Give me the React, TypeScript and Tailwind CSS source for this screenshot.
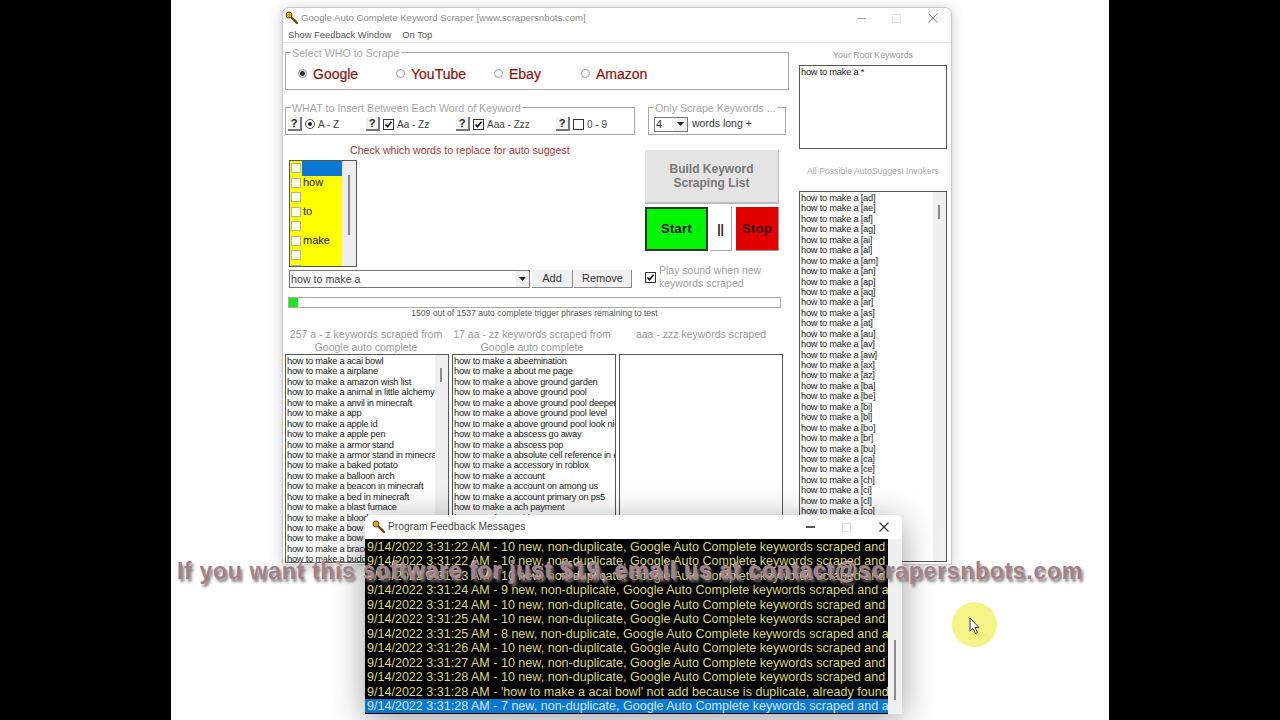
const col1 = ["acai bowl","airplane","amazon wish list","animal in little alchemy","anvil in minecraft","app","apple id","apple pen","armor stand","armor stand in minecraft","baked potato","balloon arch","beacon in minecraft","bed in minecraft","blast furnace","blood moon","bow","bow and arrow","bracelet","budget"];
const col2 = ["abeemination","about me page","above ground garden","above ground pool","above ground pool deeper","above ground pool level","above ground pool look nice","abscess go away","abscess pop","absolute cell reference in excel","accessory in roblox","account","account on among us","account primary on ps5","ach payment","acid"];
const invokers = ["ad","ae","af","ag","ai","al","am","an","ap","aq","ar","as","at","au","av","aw","ax","az","ba","be","bi","bl","bo","br","bu","ca","ce","ch","ci","cl","co"];
const feedback = [
  "9/14/2022 3:31:22 AM - 10 new, non-duplicate, Google Auto Complete keywords scraped and added",
  "9/14/2022 3:31:22 AM - 10 new, non-duplicate, Google Auto Complete keywords scraped and added",
  "9/14/2022 3:31:23 AM - 10 new, non-duplicate, Google Auto Complete keywords scraped and added",
  "9/14/2022 3:31:24 AM - 9 new, non-duplicate, Google Auto Complete keywords scraped and added",
  "9/14/2022 3:31:24 AM - 10 new, non-duplicate, Google Auto Complete keywords scraped and added",
  "9/14/2022 3:31:25 AM - 10 new, non-duplicate, Google Auto Complete keywords scraped and added",
  "9/14/2022 3:31:25 AM - 8 new, non-duplicate, Google Auto Complete keywords scraped and added",
  "9/14/2022 3:31:26 AM - 10 new, non-duplicate, Google Auto Complete keywords scraped and added",
  "9/14/2022 3:31:27 AM - 10 new, non-duplicate, Google Auto Complete keywords scraped and added",
  "9/14/2022 3:31:28 AM - 10 new, non-duplicate, Google Auto Complete keywords scraped and added",
  "9/14/2022 3:31:28 AM - 'how to make a acai bowl' not add because is duplicate, already found",
  "9/14/2022 3:31:28 AM - 7 new, non-duplicate, Google Auto Complete keywords scraped and added",
];

const KeyIcon = () => (
  <svg width="14" height="14" viewBox="0 0 14 14" className="shrink-0">
    <path d="M5 5 L12 12" stroke="#6b4a10" strokeWidth="2.4" strokeLinecap="round"/>
    <path d="M9.5 10.5 L11 9" stroke="#6b4a10" strokeWidth="1.6"/>
    <circle cx="4" cy="4" r="3" fill="#d9a520" stroke="#6b4a10" strokeWidth="1"/>
  </svg>
);

const Group = ({label, className, children}: {label: string; className: string; children: React.ReactNode}) => (
  <div className={`relative border border-[#a8a8a8] ${className}`}>
    <span className="absolute left-[5px] top-[-6px] bg-white px-px text-[10.7px] leading-[12px] text-[#a6a6a6] whitespace-nowrap">{label}</span>
    {children}
  </div>
);

const Radio = ({checked}: {checked?: boolean}) => (
  <span className="w-[9px] h-[9px] rounded-full border border-[#9a9a9a] bg-white flex items-center justify-center shrink-0">
    {checked && <span className="w-[5px] h-[5px] rounded-full bg-[#333]"/>}
  </span>
);

const Site = ({name, checked, className}: {name: string; checked?: boolean; className: string}) => (
  <div className={`flex items-center gap-[6px] ${className}`}>
    <Radio checked={checked}/>
    <span className="text-[14px] leading-[16px] text-[#8f1010] [-webkit-text-stroke:0.2px_#8f1010]">{name}</span>
  </div>
);

const Help = () => (
  <span className="w-[14px] h-[14px] border-b-2 border-r-2 border-[#777] bg-[#f2f2f2] flex items-center justify-center text-[11px] font-bold leading-none text-[#222] shrink-0">?</span>
);

const Check = ({checked}: {checked?: boolean}) => (
  <span className="w-[11px] h-[11px] border border-[#333] bg-white flex items-center justify-center shrink-0">
    {checked && (
      <svg width="9" height="9" viewBox="0 0 9 9"><path d="M1.5 4.5 L3.5 6.8 L7.5 1.8" fill="none" stroke="#111" strokeWidth="1.6"/></svg>
    )}
  </span>
);

const Arrow = () => (
  <svg width="7" height="4" viewBox="0 0 7 4"><path d="M0 0 H7 L3.5 4 Z" fill="#222"/></svg>
);

const Thumb = ({className}: {className: string}) => (
  <div className={`absolute w-[2px] bg-[#8a8a8a] ${className}`}/>
);

const ListBox = ({rows, className, bar}: {rows: string[]; className: string; bar?: boolean}) => (
  <div className={`relative border border-[#555] bg-white overflow-hidden flex ${className}`}>
    <div className="flex-1 min-w-0 overflow-hidden pl-px pt-px text-[9.3px] tracking-[-0.24px] leading-[10.43px] text-[#222] whitespace-nowrap">
      {rows.map((r, i) => <div key={i}>{r}</div>)}
    </div>
    {bar && (
      <div className="relative w-[13px] bg-[#f0f0f0] shrink-0">
        <Thumb className="left-[5px] top-[13px] h-[14px]"/>
      </div>
    )}
  </div>
);

const WordRow = ({word}: {word: string}) => (
  <div className="flex items-center h-[14.5px]">
    <span className="w-[10px] h-[10px] border border-[#b4b4a0] bg-[#fffff0] ml-px mr-[2px] shrink-0"/>
    <span className="text-[11px] leading-none text-[#222]">{word}</span>
  </div>
);

export default function App() {
  return (
    <div className="relative w-[1280px] h-[720px] overflow-hidden bg-black font-['Liberation_Sans',Arial,sans-serif]">
      <div className="absolute left-[171px] top-0 w-[938px] h-[720px] bg-white"/>

      {/* main window */}
      <div className="absolute left-[282px] top-[7px] w-[670px] h-[558px] rounded-t-[7px] border border-[#c8c8c8] bg-white shadow-[0_2px_14px_rgba(0,0,0,0.22)] flex flex-col overflow-hidden">
        <div className="h-[20px] flex items-center pl-[2px] shrink-0">
          <KeyIcon/>
          <span className="ml-[2px] text-[9.6px] text-[#8c8c8c]">Google Auto Complete Keyword Scraper [www.scrapersnbots.com]</span>
          <div className="ml-auto flex items-center text-[#999]">
            <span className="w-[9px] h-px bg-[#aaa] mr-[26px]"/>
            <span className="w-[9px] h-[9px] border border-[#e2e2e2] mr-[27px]"/>
            <svg width="10" height="10" viewBox="0 0 10 10" className="mr-[13px]"><path d="M0.5 0.5 L9.5 9.5 M9.5 0.5 L0.5 9.5" stroke="#888" strokeWidth="1"/></svg>
          </div>
        </div>
        <div className="h-[15px] flex items-center pl-[5px] gap-[11px] text-[9.4px] text-[#555] border-b border-[#e6e6e6] shrink-0">
          <span>Show Feedback Window</span>
          <span>On Top</span>
        </div>

        <div className="flex flex-1 min-h-0">
          {/* left side */}
          <div className="w-[512px] pl-[2px] shrink-0 flex flex-col">
            <Group label="Select WHO to Scrape" className="mt-[9px] w-[504px] h-[38px] flex items-center pt-[5px] shrink-0">
              <Site name="Google" checked className="ml-[12px] w-[98px]"/>
              <Site name="YouTube" className="w-[98px]"/>
              <Site name="Ebay" className="w-[87px]"/>
              <Site name="Amazon" className="w-[100px]"/>
            </Group>

            <div className="mt-[17px] flex gap-[13px] shrink-0">
              <Group label="WHAT to Insert Between Each Word of Keyword" className="w-[350px] h-[28px] flex items-center pt-[6px] text-[10px] text-[#444] pl-[2px]">
                <div className="flex items-center gap-[3px] w-[78px]"><Help/><span className="w-[10px] h-[10px] rounded-full border border-[#444] flex items-center justify-center"><span className="w-[4px] h-[4px] rounded-full bg-[#222]"/></span><span>A - Z</span></div>
                <div className="flex items-center gap-[3px] w-[90px]"><Help/><Check checked/><span>Aa - Zz</span></div>
                <div className="flex items-center gap-[3px] w-[100px]"><Help/><Check checked/><span>Aaa - Zzz</span></div>
                <div className="flex items-center gap-[3px]"><Help/><Check/><span>0 - 9</span></div>
              </Group>
              <Group label="Only Scrape Keywords ..." className="w-[138px] h-[28px] flex items-center pt-[6px] pl-[5px] text-[10.5px] text-[#333]">
                <div className="w-[34px] h-[15px] border border-[#777] bg-white flex items-center pl-px text-[11px]">
                  <span>4</span>
                  <span className="ml-auto w-[13px] h-full bg-[#f0f0f0] flex items-center justify-center"><Arrow/></span>
                </div>
                <span className="ml-[4px]">words long +</span>
              </Group>
            </div>

            <div className="mt-[9px] flex shrink-0">
              <div className="w-[360px] pl-[4px] shrink-0">
                <div className="h-[12px] pl-[61px] text-[10.6px] leading-[12px] text-[#a33a3a] whitespace-nowrap">Check which words to replace for auto suggest</div>
                <div className="mt-[4px] w-[68px] h-[107px] border border-[#555] flex overflow-hidden">
                  <div className="w-[52px] bg-[#ffff00] relative">
                    <div className="absolute left-[12px] top-0 right-0 h-[15px] bg-[#0a78d2]"/>
                    <div className="relative">
                      {["", "how", "", "to", "", "make", "", ""].map((w, i) => <WordRow key={i} word={w}/>)}
                    </div>
                  </div>
                  <div className="relative flex-1 bg-[#ededed]">
                    <Thumb className="left-[6px] top-[14px] h-[60px]"/>
                  </div>
                </div>
                <div className="mt-[3px] flex items-center h-[18px]">
                  <div className="w-[241px] h-[18px] border border-[#777] bg-white flex items-center text-[10.7px] text-[#444] pl-px">
                    <span>how to make a</span>
                    <span className="ml-auto w-[13px] h-full bg-[#f0f0f0] flex items-center justify-center"><Arrow/></span>
                  </div>
                  <div className="ml-[2px] w-[41px] h-[18px] bg-[#f0f0f0] border-b border-r border-[#888] flex items-center justify-center text-[11px] text-[#333]">Add</div>
                  <div className="ml-px w-[58px] h-[18px] bg-[#f0f0f0] border-b border-r border-[#888] flex items-center justify-center text-[11px] text-[#333]">Remove</div>
                </div>
              </div>
              <div className="w-[134px] pt-[6px] shrink-0">
                <div className="h-[54px] bg-[#e4e4e4] border-b-2 border-r border-[#bdbdbd] flex items-center justify-center text-center text-[12px] leading-[14.5px] font-bold text-[#777]">Build Keyword<br/>Scraping List</div>
                <div className="mt-[3px] flex h-[44px]">
                  <div className="w-[63px] bg-[#00f500] border-2 border-[#333] flex items-center justify-center font-bold text-[13px] tracking-[0.3px] text-[#111]">Start</div>
                  <div className="ml-[2px] w-[22px] bg-white border-b border-r border-[#aaa] flex items-center justify-center text-[12px] font-bold text-[#222]">||</div>
                  <div className="ml-[4px] w-[43px] bg-[#e00000] border-b border-r border-[#999] flex items-center justify-center font-bold text-[13px] tracking-[0.3px] text-[#3a0c0c]">Stop</div>
                </div>
                <div className="mt-[13px] flex items-center">
                  <Check checked/>
                  <span className="ml-[3px] text-[10.5px] leading-[13px] text-[#a0a0a0]">Play sound when new<br/>keywords scraped</span>
                </div>
              </div>
            </div>

            <div className="ml-[3px] mt-[7px] w-[493px] h-[11px] border border-[#aaa] bg-white shrink-0">
              <div className="w-[9px] h-full bg-[#1fe61f]"/>
            </div>
            <div className="ml-[3px] w-[493px] h-[11px] text-center text-[8.6px] leading-[11px] text-[#555] shrink-0 whitespace-nowrap">1509 out of 1537 auto complete trigger phrases remaining to test</div>

            <div className="mt-[9px] flex text-[10.5px] leading-[13px] text-[#9a9a9a] text-center shrink-0 h-[26px]">
              <div className="w-[162px]">257 a - z keywords scraped from<br/>Google auto complete</div>
              <div className="ml-[5px] w-[160px]">17 aa - zz keywords scraped from<br/>Google auto complete</div>
              <div className="ml-[7px] w-[164px]">aaa - zzz keywords scraped</div>
            </div>

            <div className="flex gap-[3px] flex-1 min-h-0 pb-px">
              <ListBox rows={col1.map(k => "how to make a " + k)} className="w-[164px] h-[209px]" bar/>
              <ListBox rows={col2.map(k => "how to make a " + k)} className="w-[164px] h-[209px]"/>
              <ListBox rows={[]} className="w-[164px] h-[209px]"/>
            </div>
          </div>

          {/* right side */}
          <div className="flex-1 min-w-0 pl-[4px] flex flex-col">
            <div className="h-[22px] pt-[6px] w-[148px] text-center text-[8.8px] leading-[12px] text-[#999] shrink-0">Your Root Keywords</div>
            <div className="w-[148px] h-[84px] border border-[#555] pl-px pt-px text-[9.3px] tracking-[-0.24px] leading-[10.43px] text-[#222] shrink-0">how to make a *</div>
            <div className="mt-[16px] h-[12px] w-[148px] text-center text-[8.7px] leading-[12px] text-[#aaa] shrink-0 whitespace-nowrap">All Possible AutoSuggest Invokers</div>
            <ListBox rows={invokers.map(k => `how to make a [${k}]`)} className="mt-[14px] w-[148px] h-[371px]" bar/>
          </div>
        </div>
      </div>

      {/* feedback window */}
      <div className="absolute left-[365px] top-[515px] w-[537px] h-[199px] rounded-t-[6px] bg-white shadow-[0_6px_34px_rgba(0,0,0,0.38)] flex flex-col overflow-hidden">
        <div className="h-[24px] flex items-center pl-[7px] shrink-0">
          <KeyIcon/>
          <span className="ml-[2px] text-[10.3px] text-[#444]">Program Feedback Messages</span>
          <div className="ml-auto flex items-center">
            <span className="w-[9px] h-[2px] bg-[#555] mr-[27px]"/>
            <span className="w-[9px] h-[9px] border border-[#ddd] mr-[28px]"/>
            <svg width="10" height="10" viewBox="0 0 10 10" className="mr-[13px]"><path d="M0.5 0.5 L9.5 9.5 M9.5 0.5 L0.5 9.5" stroke="#333" strokeWidth="1.2"/></svg>
          </div>
        </div>
        <div className="flex flex-1 min-h-0">
          <div className="w-[523px] bg-black pt-px overflow-hidden text-[12.55px] leading-[14.45px] text-[#d9d97a] whitespace-nowrap">
            {feedback.map((f, i) => (
              <div key={i} className={i === feedback.length - 1 ? "pl-[2px] bg-[#0a78d2] text-[#cfe8ff]" : "pl-[2px]"}>{f}</div>
            ))}
          </div>
          <div className="relative flex-1 bg-[#f0f0f0]">
            <Thumb className="left-[6px] top-[101px] h-[60px]"/>
          </div>
        </div>
      </div>

      {/* video overlay */}
      <div className="absolute left-[177px] top-[556px] text-[23px] leading-[30px] font-bold tracking-[0.7px] whitespace-nowrap text-[#a58088] [text-shadow:-1px_-1px_0_rgba(255,255,255,0.55),2px_3px_3px_#777]">If you want this software for just $19, email us at contact@scrapersnbots.com</div>

      <div className="absolute left-[952px] top-[602px] w-[45px] h-[45px] rounded-full bg-[#f5f587]"/>
      <svg width="12" height="18" viewBox="0 0 12 18" className="absolute left-[969px] top-[617px]">
        <path d="M1 1 V14 L4 11.5 L6.5 16.5 L8.5 15.5 L6 10.5 H10 Z" fill="#fff" stroke="#333" strokeWidth="1"/>
      </svg>
    </div>
  );
}
